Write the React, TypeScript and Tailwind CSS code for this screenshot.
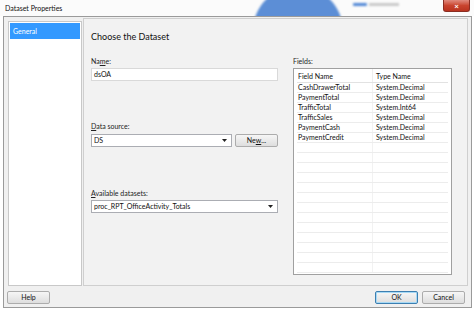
import React from 'react';

const fields = [
  ['CashDrawerTotal', 'System.Decimal'],
  ['PaymentTotal', 'System.Decimal'],
  ['TrafficTotal', 'System.Int64'],
  ['TrafficSales', 'System.Decimal'],
  ['PaymentCash', 'System.Decimal'],
  ['PaymentCredit', 'System.Decimal'],
];

const Caret = () => (
  <svg width="5" height="3" viewBox="0 0 5 3" className="shrink-0">
    <path d="M0 0h5L2.5 3z" fill="#222" />
  </svg>
);

const Btn = ({ children, primary }: { children: React.ReactNode; primary?: boolean }) => (
  <button
    className={
      'flex items-center justify-center h-[13px] w-[43px] rounded-[2px] border text-[7px] leading-none text-[#111] bg-gradient-to-b from-[#f6f6f6] to-[#dedede] ' +
      (primary ? 'border-[#3c7fb1] shadow-[inset_0_0_0_1px_#a7d9f5]' : 'border-[#acacac]')
    }
  >
    {children}
  </button>
);

const Select = ({ value, width }: { value: string; width: string }) => (
  <div className={`${width} h-[13px] border border-[#abadb3] bg-white flex items-center justify-between pl-[2px] pr-[4px]`}>
    <span className="text-[7px] leading-none text-[#111]">{value}</span>
    <Caret />
  </div>
);

const Label = ({ pre, key_, post }: { pre: string; key_: string; post: string }) => (
  <div className="h-[9px] text-[7px] leading-[9px] text-[#222]">
    {pre}
    <span className="underline">{key_}</span>
    {post}
  </div>
);

export default function App() {
  const rows = [...fields, ...Array(13).fill(['', ''])];
  return (
    <div
      className="w-[474px] h-[312px] bg-white flex flex-col overflow-hidden"
      style={{ fontFamily: 'Lato, "Open Sans", sans-serif' }}
    >
      {/* title bar */}
      <div className="relative h-[16px] flex items-start justify-between pl-[5px] pr-[4px] bg-[#fbfbfb]">
        <svg className="absolute left-0 top-0" width="474" height="16" viewBox="0 0 474 16">
          <defs>
            <filter id="b" x="-20%" y="-50%" width="140%" height="200%">
              <feGaussianBlur stdDeviation="1.2" />
            </filter>
          </defs>
          <circle cx="298" cy="31" r="45" fill="#5b8ed6" filter="url(#b)" />
          <rect x="353" y="3" width="14" height="3" rx="1" fill="#4f86d6" filter="url(#b)" />
          <rect x="369" y="3" width="30" height="3" fill="#c9c9c9" filter="url(#b)" />
        </svg>
        <span className="relative mt-[3px] text-[7px] leading-[10px] text-[#111]">Dataset Properties</span>
        <div className="relative w-[27px] h-[12px] rounded-b-[3px] bg-gradient-to-b from-[#e08a7e] via-[#c9442f] to-[#b9331f] border border-t-0 border-[#8a2d22] flex items-center justify-center text-white text-[8px] font-bold leading-none">
          ×
        </div>
      </div>

      {/* dialog body */}
      <div className="ml-[3px] mr-[2px] h-[292px] border border-[#9a9a9a] bg-[#f0f0f0] flex flex-col pt-[1px] pl-[4px] pr-[3px]">
        <div className="flex gap-[1px] h-[268px]">
          {/* nav */}
          <div className="mt-[3px] w-[74px] h-[265px] bg-white border border-[#c8c8c8] p-[1px]">
            <div className="h-[16px] bg-[#3399ff] text-white text-[7px] leading-[16px] pl-[3px]">General</div>
          </div>

          {/* main panel */}
          <div className="w-[385px] h-[268px] border border-[#cfcfcf] bg-[#f2f2f2] pl-[7px]">
            <div className="mt-[12px] text-[9px] leading-[11px] text-[#111]">Choose the Dataset</div>
            <div className="mt-[15px] flex gap-[15px]">
              <div className="w-[187px] flex flex-col">
                <Label pre="Na" key_="m" post="e:" />
                <div className="mt-[2px] h-[13px] border border-[#d9d9d9] bg-white text-[7px] leading-[11px] pl-[2px] text-[#111]">
                  dsOA
                </div>
                <div className="mt-[41px]">
                  <Label pre="" key_="D" post="ata source:" />
                </div>
                <div className="mt-[3px] flex gap-[3px]">
                  <Select value="DS" width="w-[141px]" />
                  <Btn>
                    Ne<span className="underline">w</span>...
                  </Btn>
                </div>
                <div className="mt-[42px]">
                  <Label pre="" key_="A" post="vailable datasets:" />
                </div>
                <div className="mt-[2px]">
                  <Select value="proc_RPT_OfficeActivity_Totals" width="w-[187px]" />
                </div>
              </div>

              <div className="w-[159px] flex flex-col">
                <div className="h-[9px] text-[7px] leading-[9px] text-[#222]">Fields:</div>
                <div className="mt-[2px] h-[207px] border border-[#a0a0a0] bg-white px-[3px] overflow-hidden">
                  <div className="flex h-[14px] border-b border-[#e2e2e2] text-[7px] leading-[14px] text-[#111]">
                    <div className="w-[76px] pl-[1px] border-r border-[#eeeeee]">Field Name</div>
                    <div className="pl-[3px]">Type Name</div>
                  </div>
                  {rows.map((r, i) => (
                    <div key={i} className="flex h-[10px] border-b border-[#ececec] text-[7px] leading-[9px] text-[#111]">
                      <div className="w-[76px] pl-[1px] border-r border-[#f2f2f2]">{r[0]}</div>
                      <div className="pl-[3px]">{r[1]}</div>
                    </div>
                  ))}
                </div>
              </div>
            </div>
          </div>
        </div>

        {/* bottom buttons */}
        <div className="mt-[5px] flex items-center justify-between pr-[3px]">
          <div className="flex -ml-[1px]">
            <Btn>Help</Btn>
          </div>
          <div className="flex gap-[4px]">
            <Btn primary>OK</Btn>
            <Btn>Cancel</Btn>
          </div>
        </div>
      </div>
    </div>
  );
}
